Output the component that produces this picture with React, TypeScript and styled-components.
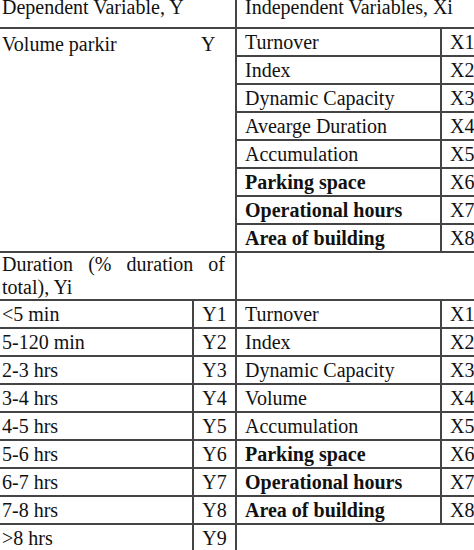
import React from "react"
import styled, { createGlobalStyle } from "styled-components"

const GlobalStyle = createGlobalStyle`
  html, body {
    margin: 0;
    padding: 0;
    background: #fff;
    overflow: hidden;
  }
  body {
    font-family: "Liberation Serif", "Times New Roman", serif;
    color: #111;
  }
`

const Page = styled.div`
  width: 474px;
  height: 550px;
  overflow: hidden;
`

const Table = styled.table`
  border-collapse: collapse;
  table-layout: fixed;
  width: 498px;
  margin-left: -8px;
  font-size: 20px;
`

const Col = styled.col<{ $w: number }>`
  width: ${p => p.$w}px;
`

const Row = styled.tr<{ $h?: number }>`
  height: ${p => p.$h ?? 28}px;
`

const Cell = styled.td<{
  $bold?: boolean
  $center?: boolean
  $top?: boolean
  $hideLeft?: boolean
  $hideRight?: boolean
}>`
  border: 2px solid #444;
  ${p => p.$hideLeft && "border-left-style: hidden;"}
  ${p => p.$hideRight && "border-right-style: hidden;"}
  padding: 0 8px;
  line-height: 24px;
  vertical-align: ${p => (p.$top ? "top" : "middle")};
  font-weight: ${p => (p.$bold ? 700 : 400)};
  text-align: ${p => (p.$center ? "center" : "left")};
  white-space: nowrap;
  overflow: hidden;
`

const HeadCell = styled.th`
  border: 2px solid #444;
  border-top-style: hidden;
  padding: 0 8px;
  line-height: 14px;
  vertical-align: top;
  font-weight: 400;
  text-align: left;
  white-space: nowrap;
  overflow: hidden;
`

const TopCell = styled(Cell)`
  padding-top: 3px;
  line-height: 24px;
`

const WrapCell = styled.td`
  border: 2px solid #444;
  padding: 0 10px 0 8px;
  line-height: 23px;
  vertical-align: top;
  text-align: justify;
  text-align-last: left;
`

const BlankCell = styled.td`
  border: 2px solid #444;
`

type Item = { label: string; code: string; bold?: boolean }

const topFactors: Item[] = [
  { label: "Turnover", code: "X1" },
  { label: "Index", code: "X2" },
  { label: "Dynamic Capacity", code: "X3" },
  { label: "Avearge Duration", code: "X4" },
  { label: "Accumulation", code: "X5" },
  { label: "Parking space", code: "X6", bold: true },
  { label: "Operational hours", code: "X7", bold: true },
  { label: "Area of building", code: "X8", bold: true },
]

const durations: Item[] = [
  { label: "<5 min", code: "Y1" },
  { label: "5-120 min", code: "Y2" },
  { label: "2-3 hrs", code: "Y3" },
  { label: "3-4 hrs", code: "Y4" },
  { label: "4-5 hrs", code: "Y5" },
  { label: "5-6 hrs", code: "Y6" },
  { label: "6-7 hrs", code: "Y7" },
  { label: "7-8 hrs", code: "Y8" },
  { label: ">8 hrs", code: "Y9" },
]

const bottomFactors: Item[] = [
  { label: "Turnover", code: "X1" },
  { label: "Index", code: "X2" },
  { label: "Dynamic Capacity", code: "X3" },
  { label: "Volume", code: "X4" },
  { label: "Accumulation", code: "X5" },
  { label: "Parking space", code: "X6", bold: true },
  { label: "Operational hours", code: "X7", bold: true },
  { label: "Area of building", code: "X8", bold: true },
]

const App = () => {
  return (
    <>
      <GlobalStyle />
      <Page>
        <Table>
          <colgroup>
            <Col $w={200} />
            <Col $w={43} />
            <Col $w={205} />
            <Col $w={50} />
          </colgroup>
          <thead>
            <Row>
              <HeadCell colSpan={2}>Dependent Variable, Y</HeadCell>
              <HeadCell colSpan={2}>Independent Variables, Xi</HeadCell>
            </Row>
          </thead>
          <tbody>
            {topFactors.map((f, i) => (
              <Row key={"t" + f.code}>
                {i === 0 && (
                  <>
                    <TopCell rowSpan={topFactors.length} $top $hideRight>
                      Volume parkir
                    </TopCell>
                    <TopCell rowSpan={topFactors.length} $top $hideLeft>
                      Y
                    </TopCell>
                  </>
                )}
                <Cell $bold={f.bold}>{f.label}</Cell>
                <Cell>{f.code}</Cell>
              </Row>
            ))}
            <Row $h={46}>
              <WrapCell colSpan={2}>Duration (% duration of total), Yi</WrapCell>
              <BlankCell colSpan={2} />
            </Row>
            {durations.map((d, i) => {
              const f = bottomFactors[i]
              return (
                <Row key={d.code}>
                  <Cell>{d.label}</Cell>
                  <Cell $center>{d.code}</Cell>
                  {f ? (
                    <>
                      <Cell $bold={f.bold}>{f.label}</Cell>
                      <Cell>{f.code}</Cell>
                    </>
                  ) : (
                    <BlankCell colSpan={2} />
                  )}
                </Row>
              )
            })}
          </tbody>
        </Table>
      </Page>
    </>
  )
}

export default App
